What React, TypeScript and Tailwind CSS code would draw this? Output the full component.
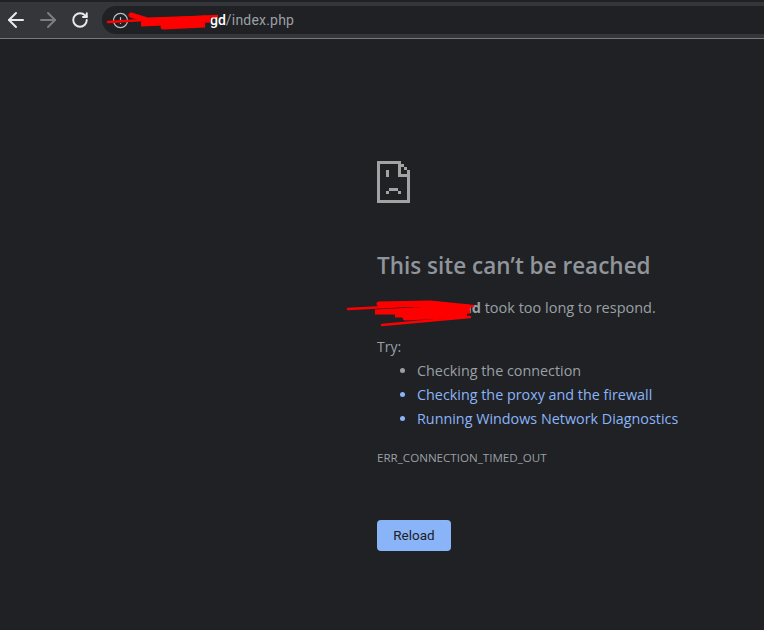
import { ArrowLeft, ArrowRight, CircleAlert, RotateCw } from "lucide-react";

function SadPage() {
    return (
        <svg width="33" height="42" viewBox="0 0 33 42" fill="#a3a3a3" shapeRendering="crispEdges">
            <rect x="0" y="0" width="3" height="42" />
            <rect x="0" y="39" width="33" height="3" />
            <rect x="0" y="0" width="23" height="3" />
            <rect x="30" y="10" width="3" height="32" />
            <rect x="21" y="0" width="3" height="16" />
            <rect x="21" y="13" width="12" height="3" />
            <rect x="24" y="3" width="3" height="3" />
            <rect x="27" y="6" width="3" height="3" />
            <rect x="30" y="9" width="3" height="3" />
            <rect x="9" y="9" width="3" height="7" />
            <rect x="12" y="27" width="9" height="3" />
            <rect x="9" y="30" width="3" height="3" />
            <rect x="21" y="30" width="3" height="3" />
        </svg>
    );
}

function Scribble({ className, children, w, h }: { className: string; children: React.ReactNode; w: number; h: number }) {
    return (
        <svg className={className} width={w} height={h} viewBox={`0 0 ${w} ${h}`} fill="none" stroke="#ff0000" strokeLinecap="round">
            {children}
        </svg>
    );
}

export default function App() {
    return (
        <div className="relative w-[764px] h-[630px] overflow-hidden bg-[#202124] font-['Open_Sans','Liberation_Sans',sans-serif] text-[#9aa0a6]">
            <div className="h-[2px] bg-[#202124]" />
            <div className="h-[36px] bg-[#35363a] flex items-center pl-[4px]">
                <ArrowLeft size={24} strokeWidth={2} className="text-[#e8eaed]" />
                <ArrowRight size={24} strokeWidth={2} className="ml-[8px] text-[#7c7e82]" />
                <RotateCw size={18} strokeWidth={2.6} className="ml-[11px] text-[#e8eaed]" />
                <div className="ml-[13px] flex-1 h-[28px] rounded-l-full bg-[#202124] flex items-center pl-[10px] font-['Roboto',sans-serif] text-[14px]">
                    <CircleAlert size={17} strokeWidth={1.7} className="text-[#bdc1c6]" />
                    <span className="ml-[81px] pt-[1px] text-white font-medium">gd</span>
                    <span className="pt-[1px] tracking-[0.2px] text-[#9aa0a6]">/index.php</span>
                </div>
            </div>
            <div className="h-[1px] bg-[#77787a]" />

            <main className="pl-[377px] pt-[122px]">
                <SadPage />
                <h1 className="mt-[46px] text-[22.5px] leading-[34px] font-semibold text-[#8f959b]">This site can’t be reached</h1>
                <p className="mt-[13px] text-[14.5px] leading-[24px] pl-[86px]">
                    <span className="font-bold">ad</span> took too long to respond.
                </p>
                <p className="mt-[14px] text-[14px] leading-[25px]">Try:</p>
                <ul className="list-disc pl-[40px] text-[14.35px] leading-[24px]">
                    <li>Checking the connection</li>
                    <li className="text-[#8ab4f8]">Checking the proxy and the firewall</li>
                    <li className="text-[#8ab4f8]">Running Windows Network Diagnostics</li>
                </ul>
                <p className="mt-[17px] text-[11.6px] leading-[20px]">ERR_CONNECTION_TIMED_OUT</p>
                <button className="mt-[52px] block w-[74px] h-[31px] rounded-[4px] bg-[#8ab4f8] text-[#202124] text-[13.5px] font-['Roboto',sans-serif]">Reload</button>
            </main>

            <Scribble className="absolute left-[105px] top-[12px]" w={115} h={18}>
                <path d="M3 10 L112 4" strokeWidth="2.5" />
                <path d="M26 3 L42 8 L100 6 L105 8 L36 12 L60 11 L100 13 L58 15" strokeWidth="5" />
            </Scribble>
            <Scribble className="absolute left-[345px] top-[298px]" w={132} h={30}>
                <path d="M3 11 L60 8 L128 8" strokeWidth="2.5" />
                <path d="M34 6 L85 5 L125 9 L30 14 L125 13 L50 17 L122 17 L60 20" strokeWidth="5" />
                <path d="M37 27 L125 19" strokeWidth="2.5" />
            </Scribble>
        </div>
    );
}
